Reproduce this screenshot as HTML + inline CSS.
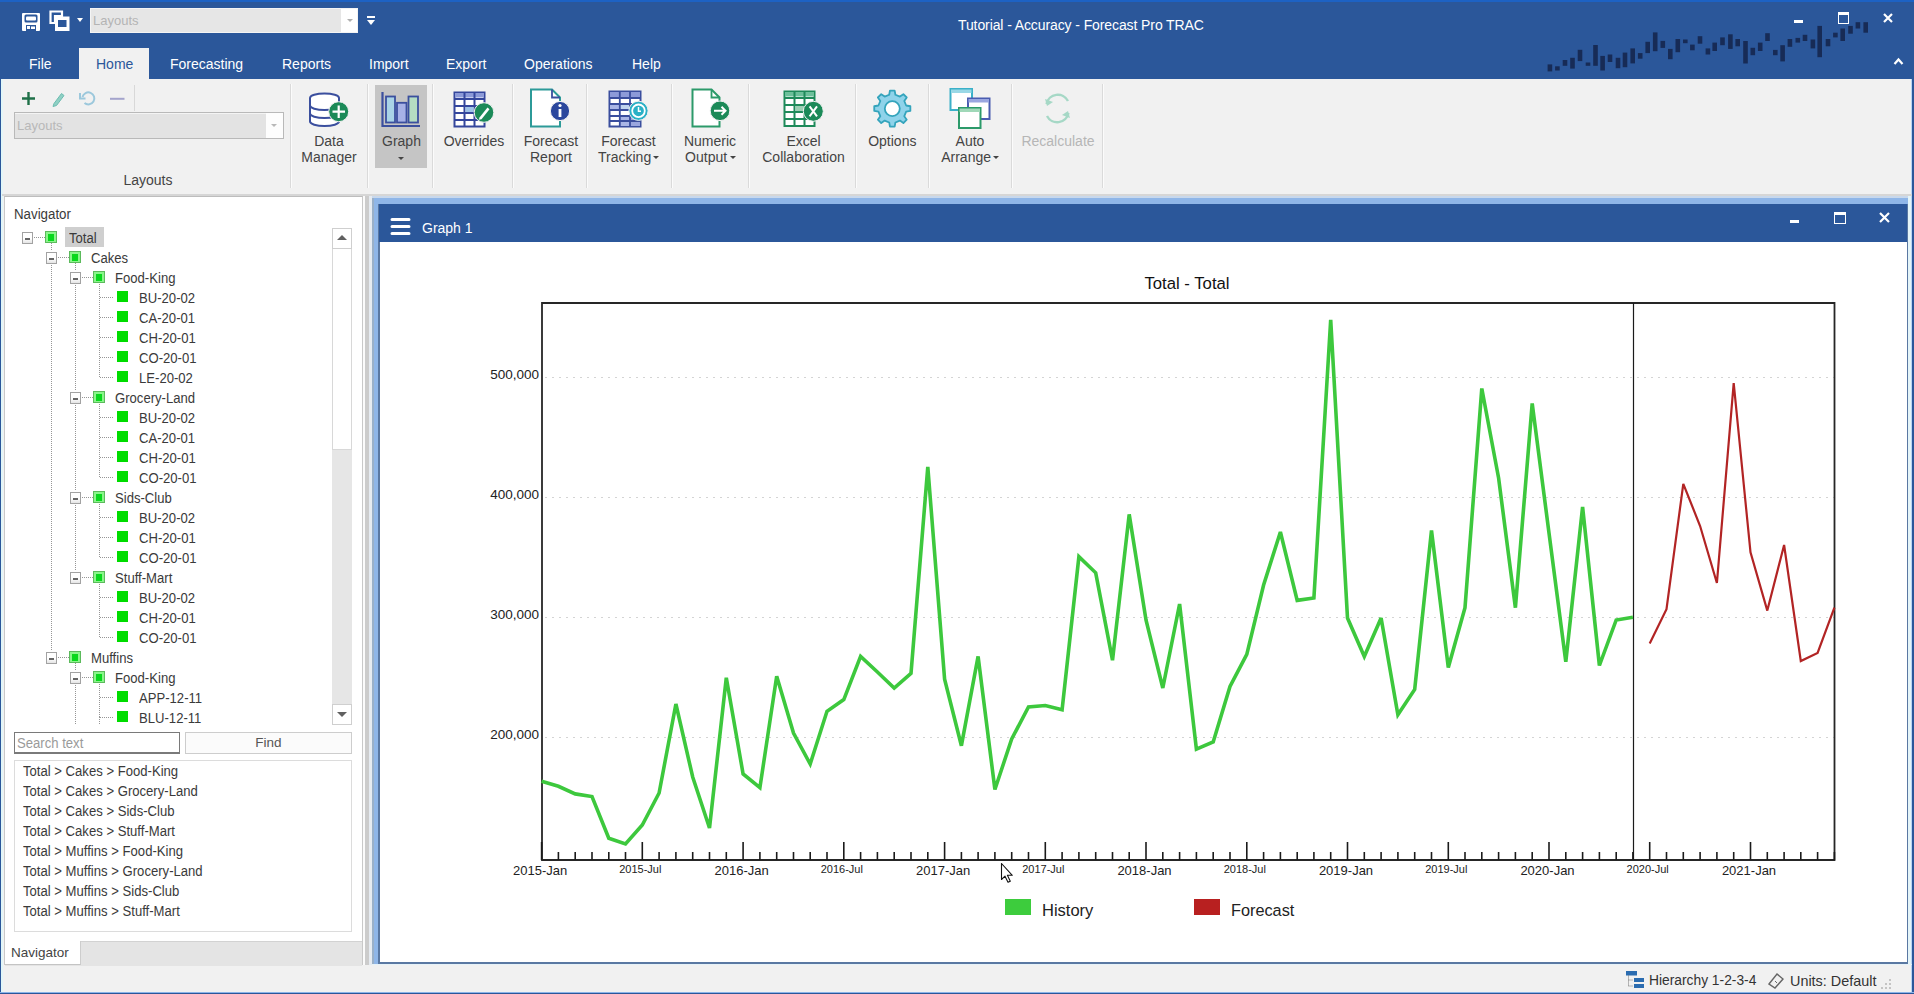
<!DOCTYPE html>
<html><head><meta charset="utf-8">
<style>
*{margin:0;padding:0;box-sizing:border-box}
html,body{width:1914px;height:994px;overflow:hidden;background:#f1f1f1;font-family:"Liberation Sans",sans-serif;color:#333}
.a{position:absolute}
.tab{position:absolute;top:56px;font-size:14px;line-height:16px;color:#fff;white-space:nowrap}
.rl{position:absolute;font-size:14px;color:#444;text-align:center;white-space:nowrap;line-height:16px}
.sep{position:absolute;top:84px;width:1px;height:104px;background:#dadada;box-shadow:1px 0 0 #fbfbfb}
.ic{position:absolute}
.tr{position:absolute;font-size:14px;line-height:16px;color:#3a3a3a;white-space:nowrap;transform:scaleX(0.936);transform-origin:0 0}
.res{position:absolute;left:23px;font-size:14px;line-height:16px;color:#3a3a3a;white-space:nowrap;transform:scaleX(0.936);transform-origin:0 0}
</style></head>
<body>
<!-- ===== TITLE BAR ===== -->
<div class="a" style="left:0;top:0;width:1914px;height:79px;background:#2b579a"></div>
<div class="a" style="left:0;top:0;width:1914px;height:2px;background:#1d62c4"></div>
<div class="a" style="left:0;top:79px;width:1px;height:915px;background:#2b579a"></div>
<div class="a" style="left:1px;top:79px;width:2px;height:913px;background:#e2f6f8"></div>
<div class="a" style="left:1912px;top:79px;width:2px;height:915px;background:#2b579a"></div>
<div class="a" style="left:1911px;top:79px;width:1px;height:913px;background:#b8d4f4"></div>
<div class="a" style="left:0;top:992px;width:1914px;height:1px;background:#8cb4e8"></div>
<div class="a" style="left:0;top:993px;width:1914px;height:1px;background:#2b579a"></div>

<!-- QAT -->

<svg class="a" style="left:20px;top:11px" width="22" height="22" viewBox="0 0 22 22">
 <rect x="2" y="2" width="18" height="18" fill="#fff" rx="1"/>
 <rect x="4.5" y="3.5" width="13" height="8" fill="#2b579a" rx="1.5"/>
 <rect x="6" y="5.5" width="10" height="4" fill="#fff" rx="1"/>
 <rect x="6" y="14" width="10" height="6" fill="#2b579a"/>
 <rect x="7" y="15" width="3" height="3" fill="#fff"/>
 <rect x="11" y="15.5" width="4" height="2.5" fill="#fff"/>
</svg>
<svg class="a" style="left:49px;top:10px" width="23" height="23" viewBox="0 0 23 23">
 <path d="M1.5 1.5H13V6H6V13H1.5Z" fill="none" stroke="#fff" stroke-width="2.2"/>
 <rect x="6" y="6.5" width="14.5" height="14.5" fill="#fff"/>
 <rect x="9" y="10" width="8.5" height="7" fill="#2b579a"/>
</svg>
<div class="a" style="left:77px;top:18px;width:0;height:0;border-left:3.5px solid transparent;border-right:3.5px solid transparent;border-top:4px solid #fff"></div>
<div class="a" style="left:367px;top:16px;width:8px;height:2px;background:#fff"></div>
<div class="a" style="left:367px;top:20px;width:0;height:0;border-left:4px solid transparent;border-right:4px solid transparent;border-top:5px solid #fff"></div>

<div class="a" style="left:90px;top:8px;width:268px;height:25px;background:#e6e6e6;border:1px solid #f4f4f4"></div>
<div class="a" style="left:341px;top:9px;width:16px;height:23px;background:#fff"></div>
<div class="a" style="left:347px;top:19px;width:0;height:0;border-left:3px solid transparent;border-right:3px solid transparent;border-top:3px solid #b0b0b0"></div>
<div class="a" style="left:93px;top:13px;font-size:13px;line-height:16px;color:#b4b4b4">Layouts</div>

<!-- title -->
<div class="a" style="left:958px;top:17px;font-size:14px;line-height:16px;color:#fff;white-space:nowrap;letter-spacing:-0.1px">Tutorial - Accuracy - Forecast Pro TRAC</div>

<!-- sparkline -->
<svg class="a" style="left:1540px;top:15px" width="340" height="62" viewBox="1540 15 340 62"><rect x="1547.6" y="64.4" width="4.6" height="7.0" fill="#172b56"/><rect x="1555.1" y="66.3" width="4.6" height="4.2" fill="#172b56"/><rect x="1562.7" y="60.0" width="4.6" height="5.8" fill="#172b56"/><rect x="1570.2" y="57.8" width="4.6" height="10.8" fill="#172b56"/><rect x="1577.7" y="49.8" width="4.6" height="11.3" fill="#172b56"/><rect x="1585.7" y="62.5" width="4.6" height="3.3" fill="#172b56"/><rect x="1593.2" y="45.0" width="4.6" height="20.8" fill="#172b56"/><rect x="1600.3" y="55.9" width="4.6" height="14.6" fill="#172b56"/><rect x="1607.7" y="54.5" width="4.6" height="7.5" fill="#172b56"/><rect x="1615.7" y="57.8" width="4.6" height="10.4" fill="#172b56"/><rect x="1622.7" y="52.6" width="4.6" height="14.6" fill="#172b56"/><rect x="1630.4" y="48.4" width="4.6" height="15.0" fill="#172b56"/><rect x="1637.9" y="53.1" width="4.6" height="5.6" fill="#172b56"/><rect x="1645.4" y="41.8" width="4.6" height="11.3" fill="#172b56"/><rect x="1652.9" y="32.4" width="4.6" height="18.8" fill="#172b56"/><rect x="1660.5" y="40.9" width="4.6" height="7.0" fill="#172b56"/><rect x="1668.0" y="48.9" width="4.6" height="10.3" fill="#172b56"/><rect x="1675.5" y="39.0" width="4.6" height="13.2" fill="#172b56"/><rect x="1683.0" y="39.5" width="4.6" height="3.7" fill="#172b56"/><rect x="1690.1" y="44.6" width="4.6" height="5.7" fill="#172b56"/><rect x="1697.7" y="36.2" width="4.6" height="7.5" fill="#172b56"/><rect x="1705.6" y="48.4" width="4.6" height="6.1" fill="#172b56"/><rect x="1712.4" y="42.6" width="4.6" height="8.4" fill="#172b56"/><rect x="1720.2" y="37.4" width="4.6" height="7.8" fill="#172b56"/><rect x="1728.1" y="34.3" width="4.6" height="14.6" fill="#172b56"/><rect x="1735.4" y="39.0" width="4.6" height="7.3" fill="#172b56"/><rect x="1743.2" y="41.0" width="4.6" height="22.5" fill="#172b56"/><rect x="1750.5" y="47.8" width="4.6" height="7.4" fill="#172b56"/><rect x="1757.9" y="42.6" width="4.6" height="8.4" fill="#172b56"/><rect x="1765.2" y="33.2" width="4.6" height="7.8" fill="#172b56"/><rect x="1773.0" y="49.9" width="4.6" height="5.3" fill="#172b56"/><rect x="1780.3" y="45.2" width="4.6" height="16.2" fill="#172b56"/><rect x="1787.6" y="39.0" width="4.6" height="7.8" fill="#172b56"/><rect x="1795.5" y="37.9" width="4.6" height="4.7" fill="#172b56"/><rect x="1802.7" y="34.8" width="4.6" height="6.2" fill="#172b56"/><rect x="1810.6" y="39.5" width="4.6" height="8.9" fill="#172b56"/><rect x="1817.4" y="25.9" width="4.6" height="31.3" fill="#172b56"/><rect x="1825.7" y="39.0" width="4.6" height="7.3" fill="#172b56"/><rect x="1833.1" y="32.7" width="4.6" height="4.7" fill="#172b56"/><rect x="1840.4" y="28.5" width="4.6" height="12.5" fill="#172b56"/><rect x="1848.2" y="25.9" width="4.6" height="7.8" fill="#172b56"/><rect x="1855.6" y="22.2" width="4.6" height="6.3" fill="#172b56"/><rect x="1863.4" y="22.2" width="4.6" height="10.5" fill="#172b56"/></svg>

<!-- window buttons -->
<div class="a" style="left:1794px;top:20px;width:9px;height:3px;background:#fff"></div>
<div class="a" style="left:1838px;top:12px;width:11px;height:12px;border:1.5px solid #fff;border-top-width:3px"></div>
<svg class="a" style="left:1882px;top:12px" width="12" height="12"><path d="M2 2L10 10M10 2L2 10" stroke="#fff" stroke-width="2.2"/></svg>
<svg class="a" style="left:1893px;top:57px" width="11" height="9"><path d="M1.5 7L5.5 2.5L9.5 7" stroke="#fff" stroke-width="2.2" fill="none"/></svg>

<!-- tabs -->
<div class="a" style="left:79px;top:48px;width:70px;height:32px;background:#f1f1f1"></div>
<div class="tab" style="left:29px">File</div>
<div class="tab" style="left:96px;color:#2b579a">Home</div>
<div class="tab" style="left:170px">Forecasting</div>
<div class="tab" style="left:282px">Reports</div>
<div class="tab" style="left:369px">Import</div>
<div class="tab" style="left:446px">Export</div>
<div class="tab" style="left:524px">Operations</div>
<div class="tab" style="left:632px">Help</div>

<!-- ===== RIBBON ===== -->
<div class="a" style="left:2px;top:194px;width:1910px;height:2px;background:#d6d6d6"></div>
<div class="sep" style="left:290px"></div>
<div class="sep" style="left:367px"></div>
<div class="sep" style="left:432px"></div>
<div class="sep" style="left:512px"></div>
<div class="sep" style="left:586px"></div>
<div class="sep" style="left:671px"></div>
<div class="sep" style="left:748px"></div>
<div class="sep" style="left:855px"></div>
<div class="sep" style="left:928px"></div>
<div class="sep" style="left:1011px"></div>
<div class="sep" style="left:1102px"></div>
<svg class="ic" style="left:18px;top:88px" width="120" height="22" viewBox="18 88 120 22">
<path d="M28.5 92V105M22 98.5H35" stroke="#1f7048" stroke-width="2.4"/>
<path d="M54 103.5L61.5 93.5L64 95.5L56.5 105.5L53 106.5Z" fill="#8fd0c4" stroke="#6cbcb0" stroke-width="1"/>
<path d="M82.5 97A6 6 0 1 1 84.5 103" fill="none" stroke="#9cc8dc" stroke-width="2"/>
<path d="M80 93V98.5H85.5" fill="none" stroke="#9cc8dc" stroke-width="2"/>
<path d="M110 98.8H124.5" stroke="#a4a4cc" stroke-width="2"/>
</svg>
<div class="a" style="left:134px;top:85px;width:1px;height:26px;background:#d8d8d8"></div>
<div class="a" style="left:14px;top:112px;width:270px;height:27px;background:#e3e3e3;border:1px solid #b9b9b9;box-shadow:inset 0 1px 0 #f4f4f4"></div>
<div class="a" style="left:266px;top:113px;width:17px;height:25px;background:#fdfdfd"></div>
<div class="a" style="left:271px;top:124px;width:0;height:0;border-left:3px solid transparent;border-right:3px solid transparent;border-top:3px solid #b8b8b8"></div>
<div class="a" style="left:17px;top:118px;font-size:13px;line-height:16px;color:#b8b8b8">Layouts</div>
<div class="rl" style="left:88px;width:120px;top:172px">Layouts</div>
<svg class="ic" style="left:305px;top:88px" width="50" height="44" viewBox="305 88 50 44">
<ellipse cx="324.5" cy="98" rx="14.5" ry="4.5" fill="#fff" stroke="#3b4f9e" stroke-width="2"/>
<path d="M310 98V121.5A14.5 4.5 0 0 0 339 121.5V98" fill="#fff" stroke="#3b4f9e" stroke-width="2"/>
<path d="M310 105.5A14.5 4.5 0 0 0 339 105.5M310 113.5A14.5 4.5 0 0 0 339 113.5" fill="none" stroke="#3b4f9e" stroke-width="2"/>
<circle cx="338.7" cy="111.7" r="10" fill="#1b8a58" stroke="#f0f0f0" stroke-width="1"/>
<path d="M338.7 105.5V118M332.5 111.7H345" stroke="#fff" stroke-width="2.2"/>
</svg>
<div class="rl" style="left:269px;width:120px;top:133px;color:#444">Data</div><div class="rl" style="left:269px;width:120px;top:149px;color:#444">Manager</div>
<div class="a" style="left:375px;top:85px;width:52px;height:83px;background:#c5c5c5"></div>
<svg class="ic" style="left:378px;top:89px" width="46" height="42" viewBox="378 89 46 42">
<rect x="386" y="96.5" width="9" height="26" fill="#a9d3e6" stroke="#3b4f9e" stroke-width="1.8"/>
<rect x="397" y="102.8" width="9.5" height="19.7" fill="#a7b2e6" stroke="#3b4f9e" stroke-width="1.8"/>
<rect x="408.5" y="96.5" width="9.5" height="26" fill="#b4dcc2" stroke="#3b4f9e" stroke-width="1.8"/>
<path d="M382.5 92V126H420" fill="none" stroke="#3b4f9e" stroke-width="2.2"/>
</svg>
<div class="rl" style="left:341.5px;width:120px;top:133px;color:#444">Graph</div>
<div class="a" style="left:398px;top:157px;width:0;height:0;border-left:3px solid transparent;border-right:3px solid transparent;border-top:3px solid #444"></div>
<svg class="ic" style="left:450px;top:88px" width="50" height="44" viewBox="450 88 50 44">
<rect x="454.5" y="92.5" width="30" height="34" fill="#fff" stroke="#34469c" stroke-width="2"/>
<rect x="455" y="93" width="29" height="4.5" fill="#8c9ad8"/>
<path d="M464.5 92.5V126.5M474.5 92.5V126.5M454.5 99H484.5M454.5 106H484.5M454.5 113H484.5M454.5 120H484.5" stroke="#34469c" stroke-width="2"/>
<rect x="465.5" y="107" width="8" height="5" fill="#9fc4e8"/>
<circle cx="484" cy="112.5" r="9.8" fill="#1b8a58" stroke="#f0f0f0" stroke-width="1"/>
<path d="M479.5 117.5L487.5 107.5L489.5 109.2L481.5 119.2L478.8 119.8Z" fill="#fff"/>
</svg>
<div class="rl" style="left:414px;width:120px;top:133px;color:#444">Overrides</div>
<svg class="ic" style="left:525px;top:86px" width="48" height="46" viewBox="525 86 48 46">
<path d="M531 89.5H552L560 97.5V126.5H531Z" fill="#fff" stroke="#2c9a98" stroke-width="2"/>
<path d="M552 89.5V97.5H560" fill="none" stroke="#3b4f9e" stroke-width="1.8"/>
<circle cx="560" cy="111" r="9.6" fill="#2b479d" stroke="#f0f0f0" stroke-width="1"/>
<rect x="558.6" y="109" width="2.8" height="8" fill="#fff"/>
<circle cx="560" cy="105.5" r="1.6" fill="#fff"/>
</svg>
<div class="rl" style="left:491px;width:120px;top:133px;color:#444">Forecast</div><div class="rl" style="left:491px;width:120px;top:149px;color:#444">Report</div>
<svg class="ic" style="left:604px;top:88px" width="50" height="44" viewBox="604 88 50 44">
<rect x="609.5" y="91.5" width="31" height="35" fill="#fff" stroke="#3a4e9e" stroke-width="2"/>
<rect x="610" y="92" width="30" height="5" fill="#8c9ad8"/>
<rect x="610" y="104" width="10" height="5" fill="#aab6e6"/><rect x="620" y="116" width="10" height="10" fill="#aab6e6"/><rect x="630" y="116" width="10" height="10" fill="#9aa6de"/><rect x="620" y="104" width="10" height="5" fill="#c0d4ee"/>
<path d="M619.8 91.5V126.5M630 91.5V126.5M609.5 98H640.5M609.5 104H640.5M609.5 110H640.5M609.5 116H640.5M609.5 121H640.5" stroke="#3a4e9e" stroke-width="1.8"/>
<circle cx="638.5" cy="110.8" r="9.6" fill="#2ab0c6" stroke="#f0f0f0" stroke-width="1"/>
<circle cx="638.5" cy="110.8" r="6.3" fill="none" stroke="#fff" stroke-width="1.8"/>
<path d="M638.5 107V111.2H641" stroke="#fff" stroke-width="1.5" fill="none"/>
</svg>
<div class="rl" style="left:568.5px;width:120px;top:133px;color:#444">Forecast</div><div class="rl" style="left:568.5px;width:120px;top:149px;color:#444">Tracking&nbsp;&nbsp;</div>
<div class="a" style="left:653px;top:156px;width:0;height:0;border-left:3px solid transparent;border-right:3px solid transparent;border-top:3px solid #444"></div>
<svg class="ic" style="left:688px;top:86px" width="48" height="46" viewBox="688 86 48 46">
<path d="M692.5 89.5H711.5L719.5 97.5V126.5H692.5Z" fill="#fff" stroke="#2c9a6a" stroke-width="2"/>
<path d="M711.5 89.5V97.5H719.5" fill="none" stroke="#2c9a6a" stroke-width="1.8"/>
<circle cx="720" cy="110.8" r="9.8" fill="#1b8a58" stroke="#f0f0f0" stroke-width="1"/>
<path d="M714 110.8H725M721.5 106.8L725.5 110.8L721.5 114.8" stroke="#fff" stroke-width="2" fill="none"/>
</svg>
<div class="rl" style="left:650px;width:120px;top:133px;color:#444">Numeric</div><div class="rl" style="left:650px;width:120px;top:149px;color:#444">Output&nbsp;&nbsp;</div>
<div class="a" style="left:730px;top:156px;width:0;height:0;border-left:3px solid transparent;border-right:3px solid transparent;border-top:3px solid #444"></div>
<svg class="ic" style="left:780px;top:86px" width="48" height="46" viewBox="780 86 48 46">
<rect x="784.5" y="91.5" width="30" height="34.5" fill="#fff" stroke="#1e8a5a" stroke-width="2"/>
<rect x="785" y="92" width="29" height="4.5" fill="#6cc09a"/>
<path d="M794.5 91.5V126M804.5 91.5V126M784.5 98H814.5M784.5 105H814.5M784.5 112H814.5M784.5 119H814.5" stroke="#1e8a5a" stroke-width="2"/>
<rect x="795.5" y="106" width="8" height="5" fill="#9cd0b4"/>
<circle cx="813.3" cy="111.3" r="10" fill="#1b8a58" stroke="#f0f0f0" stroke-width="1"/>
<path d="M809.6 106.3L817 116.3M817 106.3L809.6 116.3" stroke="#fff" stroke-width="2"/>
</svg>
<div class="rl" style="left:743.5px;width:120px;top:133px;color:#444">Excel</div><div class="rl" style="left:743.5px;width:120px;top:149px;color:#444">Collaboration</div>
<svg class="ic" style="left:870px;top:86px" width="46" height="46" viewBox="870 86 46 46">
<polygon points="906.16,105.50 910.35,106.24 910.35,110.96 906.16,111.70 904.29,116.21 906.73,119.69 903.39,123.03 899.91,120.59 895.40,122.46 894.66,126.65 889.94,126.65 889.20,122.46 884.69,120.59 881.21,123.03 877.87,119.69 880.31,116.21 878.44,111.70 874.25,110.96 874.25,106.24 878.44,105.50 880.31,100.99 877.87,97.51 881.21,94.17 884.69,96.61 889.20,94.74 889.94,90.55 894.66,90.55 895.40,94.74 899.91,96.61 903.39,94.17 906.73,97.51 904.29,100.99" fill="#8fd3ea" stroke="#34a4bc" stroke-width="1.8" stroke-linejoin="round"/>
<circle cx="892.3" cy="108.6" r="7.5" fill="#fff" stroke="#34a4bc" stroke-width="1.8"/>
</svg>
<div class="rl" style="left:832.3px;width:120px;top:133px;color:#444">Options</div>
<svg class="ic" style="left:946px;top:84px" width="48" height="48" viewBox="946 84 48 48">
<rect x="950.5" y="89" width="21.5" height="21" fill="#fff" stroke="#3ab0c8" stroke-width="2"/>
<rect x="951" y="89.5" width="20.5" height="3.5" fill="#9ad8e6"/>
<rect x="968" y="98.5" width="21.5" height="20.5" fill="#fff" stroke="#4a5cb0" stroke-width="2"/>
<rect x="968.5" y="99" width="20.5" height="3.5" fill="#9aa6e0"/>
<rect x="959" y="108" width="21.5" height="20" fill="#fff" stroke="#2c9a6a" stroke-width="2"/>
<rect x="959.5" y="108.5" width="20.5" height="3.5" fill="#a0d8b8"/>
</svg>
<div class="rl" style="left:910px;width:120px;top:133px;color:#444">Auto</div><div class="rl" style="left:910px;width:120px;top:149px;color:#444">Arrange&nbsp;&nbsp;</div>
<div class="a" style="left:993px;top:156px;width:0;height:0;border-left:3px solid transparent;border-right:3px solid transparent;border-top:3px solid #444"></div>
<svg class="ic" style="left:1038px;top:90px" width="40" height="38" viewBox="1038 90 40 38">
<path d="M1046.5 104A11.5 11.5 0 0 1 1068 101" fill="none" stroke="#a6d8c6" stroke-width="2.4"/>
<path d="M1068.5 113A11.5 11.5 0 0 1 1047 116" fill="none" stroke="#a6d8c6" stroke-width="2.4"/>
<path d="M1045 99L1047 106L1053 102Z" fill="#a6d8c6"/>
<path d="M1070 118L1068 111L1062 115Z" fill="#a6d8c6"/>
</svg>
<div class="rl" style="left:998px;width:120px;top:133px;color:#b6b6b6">Recalculate</div>

<!-- ===== NAVIGATOR PANEL ===== -->
<div class="a" style="left:4px;top:196px;width:359px;height:769px;background:#fff;border:1px solid #c9c9c9;border-top-color:#bdbdbd"></div>
<div class="a" style="left:14px;top:206px;font-size:14px;line-height:16px;color:#3a3a3a;transform:scaleX(0.95);transform-origin:0 0">Navigator</div>
<svg class="a" style="left:0;top:0" width="362" height="726"><path d="M51.5 243V251" stroke="#969696" stroke-width="1" stroke-dasharray="1 1"/><path d="M51.5 263V651" stroke="#969696" stroke-width="1" stroke-dasharray="1 1"/><path d="M75.5 263V271" stroke="#969696" stroke-width="1" stroke-dasharray="1 1"/><path d="M75.5 283V391" stroke="#969696" stroke-width="1" stroke-dasharray="1 1"/><path d="M75.5 403V491" stroke="#969696" stroke-width="1" stroke-dasharray="1 1"/><path d="M75.5 503V571" stroke="#969696" stroke-width="1" stroke-dasharray="1 1"/><path d="M75.5 663V671" stroke="#969696" stroke-width="1" stroke-dasharray="1 1"/><path d="M75.5 683V724" stroke="#969696" stroke-width="1" stroke-dasharray="1 1"/><path d="M99.5 284V377" stroke="#969696" stroke-width="1" stroke-dasharray="1 1"/><path d="M99.5 404V477" stroke="#969696" stroke-width="1" stroke-dasharray="1 1"/><path d="M99.5 504V557" stroke="#969696" stroke-width="1" stroke-dasharray="1 1"/><path d="M99.5 584V637" stroke="#969696" stroke-width="1" stroke-dasharray="1 1"/><path d="M99.5 684V717" stroke="#969696" stroke-width="1" stroke-dasharray="1 1"/><path d="M99.5 717V724" stroke="#969696" stroke-width="1" stroke-dasharray="1 1"/><path d="M34 237.5H45" stroke="#969696" stroke-width="1" stroke-dasharray="1 1"/><path d="M58 257.5H69" stroke="#969696" stroke-width="1" stroke-dasharray="1 1"/><path d="M82 277.5H93" stroke="#969696" stroke-width="1" stroke-dasharray="1 1"/><path d="M100 297.5H113" stroke="#969696" stroke-width="1" stroke-dasharray="1 1"/><path d="M100 317.5H113" stroke="#969696" stroke-width="1" stroke-dasharray="1 1"/><path d="M100 337.5H113" stroke="#969696" stroke-width="1" stroke-dasharray="1 1"/><path d="M100 357.5H113" stroke="#969696" stroke-width="1" stroke-dasharray="1 1"/><path d="M100 377.5H113" stroke="#969696" stroke-width="1" stroke-dasharray="1 1"/><path d="M82 397.5H93" stroke="#969696" stroke-width="1" stroke-dasharray="1 1"/><path d="M100 417.5H113" stroke="#969696" stroke-width="1" stroke-dasharray="1 1"/><path d="M100 437.5H113" stroke="#969696" stroke-width="1" stroke-dasharray="1 1"/><path d="M100 457.5H113" stroke="#969696" stroke-width="1" stroke-dasharray="1 1"/><path d="M100 477.5H113" stroke="#969696" stroke-width="1" stroke-dasharray="1 1"/><path d="M82 497.5H93" stroke="#969696" stroke-width="1" stroke-dasharray="1 1"/><path d="M100 517.5H113" stroke="#969696" stroke-width="1" stroke-dasharray="1 1"/><path d="M100 537.5H113" stroke="#969696" stroke-width="1" stroke-dasharray="1 1"/><path d="M100 557.5H113" stroke="#969696" stroke-width="1" stroke-dasharray="1 1"/><path d="M82 577.5H93" stroke="#969696" stroke-width="1" stroke-dasharray="1 1"/><path d="M100 597.5H113" stroke="#969696" stroke-width="1" stroke-dasharray="1 1"/><path d="M100 617.5H113" stroke="#969696" stroke-width="1" stroke-dasharray="1 1"/><path d="M100 637.5H113" stroke="#969696" stroke-width="1" stroke-dasharray="1 1"/><path d="M58 657.5H69" stroke="#969696" stroke-width="1" stroke-dasharray="1 1"/><path d="M82 677.5H93" stroke="#969696" stroke-width="1" stroke-dasharray="1 1"/><path d="M100 697.5H113" stroke="#969696" stroke-width="1" stroke-dasharray="1 1"/><path d="M100 717.5H113" stroke="#969696" stroke-width="1" stroke-dasharray="1 1"/></svg>
<div class="a" style="left:65px;top:227px;width:39px;height:20px;background:#cfcfcf"></div>
<div class="a" style="left:22px;top:232px;width:11px;height:12px;border:1.5px solid #a2a2a2;background:linear-gradient(#fff 55%,#e4e4e4)"></div>
<div class="a" style="left:25px;top:238px;width:5px;height:1.5px;background:#666"></div>
<div class="a" style="left:45px;top:231px;width:12px;height:12px;background:#8af58a;border:1px solid #5cba5c"></div>
<div class="a" style="left:48px;top:234px;width:6px;height:7px;background:#08d81c"></div>
<div class="tr" style="left:69px;top:230px">Total</div>
<div class="a" style="left:46px;top:252px;width:11px;height:12px;border:1.5px solid #a2a2a2;background:linear-gradient(#fff 55%,#e4e4e4)"></div>
<div class="a" style="left:49px;top:258px;width:5px;height:1.5px;background:#666"></div>
<div class="a" style="left:69px;top:251px;width:12px;height:12px;background:#8af58a;border:1px solid #5cba5c"></div>
<div class="a" style="left:72px;top:254px;width:6px;height:7px;background:#08d81c"></div>
<div class="tr" style="left:91px;top:250px">Cakes</div>
<div class="a" style="left:70px;top:272px;width:11px;height:12px;border:1.5px solid #a2a2a2;background:linear-gradient(#fff 55%,#e4e4e4)"></div>
<div class="a" style="left:73px;top:278px;width:5px;height:1.5px;background:#666"></div>
<div class="a" style="left:93px;top:271px;width:12px;height:12px;background:#8af58a;border:1px solid #5cba5c"></div>
<div class="a" style="left:96px;top:274px;width:6px;height:7px;background:#08d81c"></div>
<div class="tr" style="left:115px;top:270px">Food-King</div>
<div class="a" style="left:117px;top:291px;width:11px;height:11px;background:#00dc00"></div>
<div class="tr" style="left:139px;top:290px">BU-20-02</div>
<div class="a" style="left:117px;top:311px;width:11px;height:11px;background:#00dc00"></div>
<div class="tr" style="left:139px;top:310px">CA-20-01</div>
<div class="a" style="left:117px;top:331px;width:11px;height:11px;background:#00dc00"></div>
<div class="tr" style="left:139px;top:330px">CH-20-01</div>
<div class="a" style="left:117px;top:351px;width:11px;height:11px;background:#00dc00"></div>
<div class="tr" style="left:139px;top:350px">CO-20-01</div>
<div class="a" style="left:117px;top:371px;width:11px;height:11px;background:#00dc00"></div>
<div class="tr" style="left:139px;top:370px">LE-20-02</div>
<div class="a" style="left:70px;top:392px;width:11px;height:12px;border:1.5px solid #a2a2a2;background:linear-gradient(#fff 55%,#e4e4e4)"></div>
<div class="a" style="left:73px;top:398px;width:5px;height:1.5px;background:#666"></div>
<div class="a" style="left:93px;top:391px;width:12px;height:12px;background:#8af58a;border:1px solid #5cba5c"></div>
<div class="a" style="left:96px;top:394px;width:6px;height:7px;background:#08d81c"></div>
<div class="tr" style="left:115px;top:390px">Grocery-Land</div>
<div class="a" style="left:117px;top:411px;width:11px;height:11px;background:#00dc00"></div>
<div class="tr" style="left:139px;top:410px">BU-20-02</div>
<div class="a" style="left:117px;top:431px;width:11px;height:11px;background:#00dc00"></div>
<div class="tr" style="left:139px;top:430px">CA-20-01</div>
<div class="a" style="left:117px;top:451px;width:11px;height:11px;background:#00dc00"></div>
<div class="tr" style="left:139px;top:450px">CH-20-01</div>
<div class="a" style="left:117px;top:471px;width:11px;height:11px;background:#00dc00"></div>
<div class="tr" style="left:139px;top:470px">CO-20-01</div>
<div class="a" style="left:70px;top:492px;width:11px;height:12px;border:1.5px solid #a2a2a2;background:linear-gradient(#fff 55%,#e4e4e4)"></div>
<div class="a" style="left:73px;top:498px;width:5px;height:1.5px;background:#666"></div>
<div class="a" style="left:93px;top:491px;width:12px;height:12px;background:#8af58a;border:1px solid #5cba5c"></div>
<div class="a" style="left:96px;top:494px;width:6px;height:7px;background:#08d81c"></div>
<div class="tr" style="left:115px;top:490px">Sids-Club</div>
<div class="a" style="left:117px;top:511px;width:11px;height:11px;background:#00dc00"></div>
<div class="tr" style="left:139px;top:510px">BU-20-02</div>
<div class="a" style="left:117px;top:531px;width:11px;height:11px;background:#00dc00"></div>
<div class="tr" style="left:139px;top:530px">CH-20-01</div>
<div class="a" style="left:117px;top:551px;width:11px;height:11px;background:#00dc00"></div>
<div class="tr" style="left:139px;top:550px">CO-20-01</div>
<div class="a" style="left:70px;top:572px;width:11px;height:12px;border:1.5px solid #a2a2a2;background:linear-gradient(#fff 55%,#e4e4e4)"></div>
<div class="a" style="left:73px;top:578px;width:5px;height:1.5px;background:#666"></div>
<div class="a" style="left:93px;top:571px;width:12px;height:12px;background:#8af58a;border:1px solid #5cba5c"></div>
<div class="a" style="left:96px;top:574px;width:6px;height:7px;background:#08d81c"></div>
<div class="tr" style="left:115px;top:570px">Stuff-Mart</div>
<div class="a" style="left:117px;top:591px;width:11px;height:11px;background:#00dc00"></div>
<div class="tr" style="left:139px;top:590px">BU-20-02</div>
<div class="a" style="left:117px;top:611px;width:11px;height:11px;background:#00dc00"></div>
<div class="tr" style="left:139px;top:610px">CH-20-01</div>
<div class="a" style="left:117px;top:631px;width:11px;height:11px;background:#00dc00"></div>
<div class="tr" style="left:139px;top:630px">CO-20-01</div>
<div class="a" style="left:46px;top:652px;width:11px;height:12px;border:1.5px solid #a2a2a2;background:linear-gradient(#fff 55%,#e4e4e4)"></div>
<div class="a" style="left:49px;top:658px;width:5px;height:1.5px;background:#666"></div>
<div class="a" style="left:69px;top:651px;width:12px;height:12px;background:#8af58a;border:1px solid #5cba5c"></div>
<div class="a" style="left:72px;top:654px;width:6px;height:7px;background:#08d81c"></div>
<div class="tr" style="left:91px;top:650px">Muffins</div>
<div class="a" style="left:70px;top:672px;width:11px;height:12px;border:1.5px solid #a2a2a2;background:linear-gradient(#fff 55%,#e4e4e4)"></div>
<div class="a" style="left:73px;top:678px;width:5px;height:1.5px;background:#666"></div>
<div class="a" style="left:93px;top:671px;width:12px;height:12px;background:#8af58a;border:1px solid #5cba5c"></div>
<div class="a" style="left:96px;top:674px;width:6px;height:7px;background:#08d81c"></div>
<div class="tr" style="left:115px;top:670px">Food-King</div>
<div class="a" style="left:117px;top:691px;width:11px;height:11px;background:#00dc00"></div>
<div class="tr" style="left:139px;top:690px">APP-12-11</div>
<div class="a" style="left:117px;top:711px;width:11px;height:11px;background:#00dc00"></div>
<div class="tr" style="left:139px;top:710px">BLU-12-11</div>
<div class="a" style="left:332px;top:228px;width:20px;height:497px;background:#e6e6e6"></div>
<div class="a" style="left:332px;top:228px;width:20px;height:21px;background:#fff;border:1px solid #cfcfcf"></div>
<div class="a" style="left:337px;top:235px;width:0;height:0;border-left:5px solid transparent;border-right:5px solid transparent;border-bottom:5px solid #606060"></div>
<div class="a" style="left:332px;top:249px;width:20px;height:201px;background:#fff;border:1px solid #d8d8d8;border-top:none"></div>
<div class="a" style="left:332px;top:704px;width:20px;height:21px;background:#fff;border:1px solid #cfcfcf"></div>
<div class="a" style="left:337px;top:712px;width:0;height:0;border-left:5px solid transparent;border-right:5px solid transparent;border-top:5px solid #606060"></div>
<div class="a" style="left:14px;top:732px;width:166px;height:22px;border:1px solid #7a7a7a;border-bottom-width:2px;background:#fff"></div>
<div class="a" style="left:17px;top:735px;font-size:14px;line-height:16px;color:#9a9a9a;transform:scaleX(0.936);transform-origin:0 0">Search text</div>
<div class="a" style="left:185px;top:732px;width:167px;height:22px;border:1px solid #cdcdcd;background:#fbfbfb"></div>
<div class="a" style="left:185px;top:735px;width:167px;text-align:center;font-size:13.5px;line-height:16px;color:#555">Find</div>
<div class="a" style="left:14px;top:760px;width:338px;height:172px;border:1px solid #dcdcdc;background:#fff"></div>
<div class="res" style="top:763px">Total &gt; Cakes &gt; Food-King</div>
<div class="res" style="top:783px">Total &gt; Cakes &gt; Grocery-Land</div>
<div class="res" style="top:803px">Total &gt; Cakes &gt; Sids-Club</div>
<div class="res" style="top:823px">Total &gt; Cakes &gt; Stuff-Mart</div>
<div class="res" style="top:843px">Total &gt; Muffins &gt; Food-King</div>
<div class="res" style="top:863px">Total &gt; Muffins &gt; Grocery-Land</div>
<div class="res" style="top:883px">Total &gt; Muffins &gt; Sids-Club</div>
<div class="res" style="top:903px">Total &gt; Muffins &gt; Stuff-Mart</div>
<div class="a" style="left:5px;top:941px;width:357px;height:25px;background:#e4e4e4;border-top:1px solid #d2d2d2"></div>
<div class="a" style="left:5px;top:941px;width:76px;height:24px;background:#fff;border-right:1px solid #cdcdcd;border-bottom:1px solid #c4c4c4"></div>
<div class="a" style="left:11px;top:945px;font-size:13.5px;line-height:16px;color:#444">Navigator</div>

<!-- ===== GRAPH WINDOW ===== -->
<div class="a" style="left:363px;top:196px;width:10px;height:769px;background:#fbfbfb"></div>
<div class="a" style="left:365px;top:196px;width:4px;height:769px;background:#cccccc"></div>
<div class="a" style="left:369px;top:196px;width:3px;height:769px;background:#e6ebf1"></div>
<div class="a" style="left:372px;top:197px;width:1536px;height:767px;background:#8fb6e8"></div>
<div class="a" style="left:372px;top:197px;width:2px;height:767px;background:#9ab0c8"></div>
<div class="a" style="left:372px;top:196px;width:1536px;height:2px;background:#c8d8ec"></div>
<div class="a" style="left:378px;top:204px;width:1530px;height:760px;background:#5a78a2"></div>
<div class="a" style="left:379px;top:204px;width:1528px;height:38px;background:#2b579a"></div>
<div class="a" style="left:380px;top:242px;width:1527px;height:720px;background:#fff"></div>
<div class="a" style="left:1908px;top:196px;width:3px;height:769px;background:#e4f4f8"></div>
<div class="a" style="left:372px;top:964px;width:1540px;height:1px;background:#e6f2f8"></div>
<svg class="a" style="left:390px;top:216px" width="22" height="20"><path d="M2 3.5H19M2 10.5H19M2 17.5H19" stroke="#fff" stroke-width="3" stroke-linecap="round"/></svg>
<div class="a" style="left:422px;top:220px;font-size:14px;line-height:16px;color:#fff">Graph 1</div>
<div class="a" style="left:1790px;top:220px;width:9px;height:3px;background:#fff"></div>
<div class="a" style="left:1834px;top:212px;width:12px;height:12px;border:1.5px solid #fff;border-top-width:3px"></div>
<svg class="a" style="left:1878px;top:211px" width="13" height="13"><path d="M2 2L11 11M11 2L2 11" stroke="#fff" stroke-width="2.2"/></svg>
<svg class="a" style="left:380px;top:242px" width="1527" height="721" viewBox="380 242 1527 721"><path d="M545 377.5H1834" stroke="#d4d4d4" stroke-width="1" stroke-dasharray="2 5"/><path d="M545 497.5H1834" stroke="#d4d4d4" stroke-width="1" stroke-dasharray="2 5"/><path d="M545 617.5H1834" stroke="#d4d4d4" stroke-width="1" stroke-dasharray="2 5"/><path d="M545 737.5H1834" stroke="#d4d4d4" stroke-width="1" stroke-dasharray="2 5"/><path d="M542 303H1834.5V860H542Z" fill="none" stroke="#262626" stroke-width="1.8"/><path d="M1633.5 303V860" stroke="#1a1a1a" stroke-width="1.2"/><path d="M541.6 842V860" stroke="#1a1a1a" stroke-width="1.6"/><path d="M558.4 852V860" stroke="#1a1a1a" stroke-width="1.6"/><path d="M575.2 852V860" stroke="#1a1a1a" stroke-width="1.6"/><path d="M592.0 852V860" stroke="#1a1a1a" stroke-width="1.6"/><path d="M608.8 852V860" stroke="#1a1a1a" stroke-width="1.6"/><path d="M625.5 852V860" stroke="#1a1a1a" stroke-width="1.6"/><path d="M642.3 842V860" stroke="#1a1a1a" stroke-width="1.6"/><path d="M659.1 852V860" stroke="#1a1a1a" stroke-width="1.6"/><path d="M675.9 852V860" stroke="#1a1a1a" stroke-width="1.6"/><path d="M692.7 852V860" stroke="#1a1a1a" stroke-width="1.6"/><path d="M709.5 852V860" stroke="#1a1a1a" stroke-width="1.6"/><path d="M726.3 852V860" stroke="#1a1a1a" stroke-width="1.6"/><path d="M743.1 842V860" stroke="#1a1a1a" stroke-width="1.6"/><path d="M759.9 852V860" stroke="#1a1a1a" stroke-width="1.6"/><path d="M776.7 852V860" stroke="#1a1a1a" stroke-width="1.6"/><path d="M793.5 852V860" stroke="#1a1a1a" stroke-width="1.6"/><path d="M810.2 852V860" stroke="#1a1a1a" stroke-width="1.6"/><path d="M827.0 852V860" stroke="#1a1a1a" stroke-width="1.6"/><path d="M843.8 842V860" stroke="#1a1a1a" stroke-width="1.6"/><path d="M860.6 852V860" stroke="#1a1a1a" stroke-width="1.6"/><path d="M877.4 852V860" stroke="#1a1a1a" stroke-width="1.6"/><path d="M894.2 852V860" stroke="#1a1a1a" stroke-width="1.6"/><path d="M911.0 852V860" stroke="#1a1a1a" stroke-width="1.6"/><path d="M927.8 852V860" stroke="#1a1a1a" stroke-width="1.6"/><path d="M944.6 842V860" stroke="#1a1a1a" stroke-width="1.6"/><path d="M961.4 852V860" stroke="#1a1a1a" stroke-width="1.6"/><path d="M978.1 852V860" stroke="#1a1a1a" stroke-width="1.6"/><path d="M994.9 852V860" stroke="#1a1a1a" stroke-width="1.6"/><path d="M1011.7 852V860" stroke="#1a1a1a" stroke-width="1.6"/><path d="M1028.5 852V860" stroke="#1a1a1a" stroke-width="1.6"/><path d="M1045.3 842V860" stroke="#1a1a1a" stroke-width="1.6"/><path d="M1062.1 852V860" stroke="#1a1a1a" stroke-width="1.6"/><path d="M1078.9 852V860" stroke="#1a1a1a" stroke-width="1.6"/><path d="M1095.7 852V860" stroke="#1a1a1a" stroke-width="1.6"/><path d="M1112.5 852V860" stroke="#1a1a1a" stroke-width="1.6"/><path d="M1129.2 852V860" stroke="#1a1a1a" stroke-width="1.6"/><path d="M1146.0 842V860" stroke="#1a1a1a" stroke-width="1.6"/><path d="M1162.8 852V860" stroke="#1a1a1a" stroke-width="1.6"/><path d="M1179.6 852V860" stroke="#1a1a1a" stroke-width="1.6"/><path d="M1196.4 852V860" stroke="#1a1a1a" stroke-width="1.6"/><path d="M1213.2 852V860" stroke="#1a1a1a" stroke-width="1.6"/><path d="M1230.0 852V860" stroke="#1a1a1a" stroke-width="1.6"/><path d="M1246.8 842V860" stroke="#1a1a1a" stroke-width="1.6"/><path d="M1263.6 852V860" stroke="#1a1a1a" stroke-width="1.6"/><path d="M1280.4 852V860" stroke="#1a1a1a" stroke-width="1.6"/><path d="M1297.2 852V860" stroke="#1a1a1a" stroke-width="1.6"/><path d="M1313.9 852V860" stroke="#1a1a1a" stroke-width="1.6"/><path d="M1330.7 852V860" stroke="#1a1a1a" stroke-width="1.6"/><path d="M1347.5 842V860" stroke="#1a1a1a" stroke-width="1.6"/><path d="M1364.3 852V860" stroke="#1a1a1a" stroke-width="1.6"/><path d="M1381.1 852V860" stroke="#1a1a1a" stroke-width="1.6"/><path d="M1397.9 852V860" stroke="#1a1a1a" stroke-width="1.6"/><path d="M1414.7 852V860" stroke="#1a1a1a" stroke-width="1.6"/><path d="M1431.5 852V860" stroke="#1a1a1a" stroke-width="1.6"/><path d="M1448.3 842V860" stroke="#1a1a1a" stroke-width="1.6"/><path d="M1465.0 852V860" stroke="#1a1a1a" stroke-width="1.6"/><path d="M1481.8 852V860" stroke="#1a1a1a" stroke-width="1.6"/><path d="M1498.6 852V860" stroke="#1a1a1a" stroke-width="1.6"/><path d="M1515.4 852V860" stroke="#1a1a1a" stroke-width="1.6"/><path d="M1532.2 852V860" stroke="#1a1a1a" stroke-width="1.6"/><path d="M1549.0 842V860" stroke="#1a1a1a" stroke-width="1.6"/><path d="M1565.8 852V860" stroke="#1a1a1a" stroke-width="1.6"/><path d="M1582.6 852V860" stroke="#1a1a1a" stroke-width="1.6"/><path d="M1599.4 852V860" stroke="#1a1a1a" stroke-width="1.6"/><path d="M1616.2 852V860" stroke="#1a1a1a" stroke-width="1.6"/><path d="M1632.9 852V860" stroke="#1a1a1a" stroke-width="1.6"/><path d="M1649.7 842V860" stroke="#1a1a1a" stroke-width="1.6"/><path d="M1666.5 852V860" stroke="#1a1a1a" stroke-width="1.6"/><path d="M1683.3 852V860" stroke="#1a1a1a" stroke-width="1.6"/><path d="M1700.1 852V860" stroke="#1a1a1a" stroke-width="1.6"/><path d="M1716.9 852V860" stroke="#1a1a1a" stroke-width="1.6"/><path d="M1733.7 852V860" stroke="#1a1a1a" stroke-width="1.6"/><path d="M1750.5 842V860" stroke="#1a1a1a" stroke-width="1.6"/><path d="M1767.3 852V860" stroke="#1a1a1a" stroke-width="1.6"/><path d="M1784.1 852V860" stroke="#1a1a1a" stroke-width="1.6"/><path d="M1800.8 852V860" stroke="#1a1a1a" stroke-width="1.6"/><path d="M1817.6 852V860" stroke="#1a1a1a" stroke-width="1.6"/><path d="M1834.4 852V860" stroke="#1a1a1a" stroke-width="1.6"/><polyline points="541.6,781.3 558.4,786.3 575.2,793.9 592.0,796.5 608.8,838.2 625.5,844.0 642.3,825.0 659.1,793.0 675.9,704.0 692.7,777.0 709.5,828.0 726.3,677.7 743.1,774.0 759.9,787.7 776.7,676.3 793.5,733.0 810.2,764.0 827.0,711.3 843.8,699.6 860.6,656.4 877.4,672.0 894.2,688.0 911.0,673.4 927.8,467.0 944.6,679.2 961.4,745.7 978.1,656.4 994.9,789.5 1011.7,739.0 1028.5,706.9 1045.3,705.5 1062.1,709.8 1078.9,556.7 1095.7,572.8 1112.5,660.2 1129.2,514.4 1146.0,620.0 1162.8,688.0 1179.6,604.0 1196.4,749.2 1213.2,742.0 1230.0,686.5 1246.8,654.4 1263.6,585.0 1280.4,532.0 1297.2,600.4 1313.9,598.0 1330.7,319.8 1347.5,618.0 1364.3,656.4 1381.1,618.0 1397.9,714.8 1414.7,689.4 1431.5,530.5 1448.3,667.5 1465.0,607.7 1481.8,388.5 1498.6,478.0 1515.4,607.7 1532.2,403.5 1549.0,533.0 1565.8,661.7 1582.6,507.0 1599.4,665.5 1616.2,620.0 1632.9,617.3" fill="none" stroke="#3dc83d" stroke-width="3.6" stroke-linejoin="miter" stroke-miterlimit="3"/><polyline points="1649.7,643.6 1666.5,609.2 1683.3,483.8 1700.1,526.0 1716.9,583.0 1733.7,383.1 1750.5,552.4 1767.3,610.6 1784.1,545.0 1800.8,661.0 1817.6,653.0 1834.4,607.7" fill="none" stroke="#b22424" stroke-width="2.2" stroke-linejoin="miter" stroke-miterlimit="3"/></svg>
<div class="a" style="left:1095px;width:184px;top:274px;text-align:center;font-size:16.7px;line-height:20px;color:#111">Total - Total</div>
<div class="a" style="left:440px;width:99px;top:367px;text-align:right;font-size:13.5px;line-height:16px;color:#222">500,000</div>
<div class="a" style="left:440px;width:99px;top:487px;text-align:right;font-size:13.5px;line-height:16px;color:#222">400,000</div>
<div class="a" style="left:440px;width:99px;top:607px;text-align:right;font-size:13.5px;line-height:16px;color:#222">300,000</div>
<div class="a" style="left:440px;width:99px;top:727px;text-align:right;font-size:13.5px;line-height:16px;color:#222">200,000</div>
<div class="a" style="left:480.1px;width:120px;top:863px;text-align:center;font-size:13px;line-height:16px;color:#222">2015-Jan</div>
<div class="a" style="left:580.3px;width:120px;top:862px;text-align:center;font-size:11px;line-height:14px;color:#222">2015-Jul</div>
<div class="a" style="left:681.6px;width:120px;top:863px;text-align:center;font-size:13px;line-height:16px;color:#222">2016-Jan</div>
<div class="a" style="left:781.8px;width:120px;top:862px;text-align:center;font-size:11px;line-height:14px;color:#222">2016-Jul</div>
<div class="a" style="left:883.1px;width:120px;top:863px;text-align:center;font-size:13px;line-height:16px;color:#222">2017-Jan</div>
<div class="a" style="left:983.3px;width:120px;top:862px;text-align:center;font-size:11px;line-height:14px;color:#222">2017-Jul</div>
<div class="a" style="left:1084.5px;width:120px;top:863px;text-align:center;font-size:13px;line-height:16px;color:#222">2018-Jan</div>
<div class="a" style="left:1184.8px;width:120px;top:862px;text-align:center;font-size:11px;line-height:14px;color:#222">2018-Jul</div>
<div class="a" style="left:1286.0px;width:120px;top:863px;text-align:center;font-size:13px;line-height:16px;color:#222">2019-Jan</div>
<div class="a" style="left:1386.3px;width:120px;top:862px;text-align:center;font-size:11px;line-height:14px;color:#222">2019-Jul</div>
<div class="a" style="left:1487.5px;width:120px;top:863px;text-align:center;font-size:13px;line-height:16px;color:#222">2020-Jan</div>
<div class="a" style="left:1587.7px;width:120px;top:862px;text-align:center;font-size:11px;line-height:14px;color:#222">2020-Jul</div>
<div class="a" style="left:1689.0px;width:120px;top:863px;text-align:center;font-size:13px;line-height:16px;color:#222">2021-Jan</div>
<div class="a" style="left:1005px;top:899px;width:26px;height:16px;background:#3dcc3d"></div>
<div class="a" style="left:1042px;top:900px;font-size:16.5px;line-height:20px;color:#222">History</div>
<div class="a" style="left:1194px;top:899px;width:26px;height:16px;background:#b82020"></div>
<div class="a" style="left:1231px;top:900px;font-size:16.3px;line-height:20px;color:#222">Forecast</div>
<svg class="a" style="left:998px;top:860px" width="18" height="26" viewBox="998 860 18 26"><path d="M1001.5 863.5V879.5L1005 876.2L1008 882.3L1010.3 881.2L1007.4 875.3H1012.3Z" fill="#fff" stroke="#111" stroke-width="1.1" stroke-linejoin="round"/></svg>

<!-- ===== STATUS BAR ===== -->

<svg class="a" style="left:1624px;top:969px" width="22" height="22" viewBox="0 0 22 22">
 <rect x="2" y="2" width="11" height="4.5" fill="#2b6cb0"/>
 <rect x="10" y="9" width="10" height="4" fill="#2b6cb0"/>
 <rect x="10" y="15" width="10" height="4" fill="#2b6cb0"/>
 <path d="M4.5 6.5V17M4.5 11H9M4.5 17H9" stroke="#777" stroke-width="1" fill="none" stroke-dasharray="1 1"/>
</svg>
<div class="a" style="left:1649px;top:973px;font-size:13.8px;line-height:16px;color:#333;white-space:nowrap">Hierarchy 1-2-3-4</div>
<svg class="a" style="left:1766px;top:971px" width="20" height="20" viewBox="0 0 20 20">
 <path d="M3 13L11 3L17 8L9 17Z" fill="none" stroke="#666" stroke-width="1.4"/>
 <path d="M9 10L11 12" stroke="#666" stroke-width="1"/>
</svg>
<div class="a" style="left:1790px;top:973px;font-size:14.4px;line-height:16px;color:#333;white-space:nowrap">Units: Default</div>
<svg class="a" style="left:1878px;top:976px" width="16" height="16" viewBox="0 0 16 16">
 <rect x="11" y="3" width="2" height="2" fill="#c4c4c4"/><rect x="11" y="7" width="2" height="2" fill="#c4c4c4"/><rect x="7" y="7" width="2" height="2" fill="#c4c4c4"/>
 <rect x="11" y="11" width="2" height="2" fill="#c4c4c4"/><rect x="7" y="11" width="2" height="2" fill="#c4c4c4"/><rect x="3" y="11" width="2" height="2" fill="#c4c4c4"/>
</svg>

</body></html>
